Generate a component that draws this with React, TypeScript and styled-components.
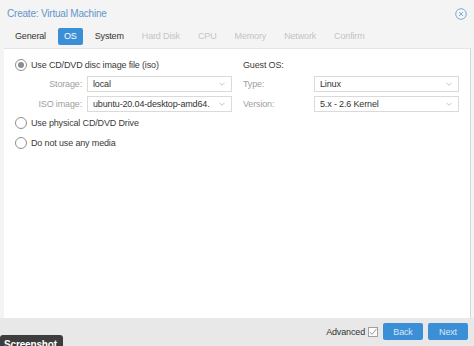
import styled, {createGlobalStyle} from "styled-components";

const GlobalStyle = createGlobalStyle`
    html, body {
        margin: 0;
        padding: 0;
        background: #f4f4f4;
        font-family: "Liberation Sans", Arial, sans-serif;
        font-size: 9px;
        letter-spacing: -0.15px;
        color: #3a3a3a;
    }
`;

const Styled = {
    Window: styled.div`
        position: relative;
        width: 474px;
        height: 346px;
        display: flex;
        flex-direction: column;
        background: #f4f4f4;
        overflow: hidden;
    `,
    Header: styled.div`
        height: 26px;
        flex: none;
        display: flex;
        align-items: center;
        justify-content: space-between;
        padding: 0 7px 0 7px;
    `,
    Title: styled.div`
        font-size: 10px;
        letter-spacing: -0.2px;
        color: #6296cc;
    `,
    Close: styled.svg`
        width: 12px;
        height: 12px;
        margin-top: 1px;
    `,
    Tabs: styled.div`
        display: flex;
        align-items: center;
        gap: 6px;
        height: 20px;
        flex: none;
        padding: 0 0 0 9px;
    `,
    Tab: styled.div<{ $active?: boolean; $disabled?: boolean }>`
        height: 17px;
        line-height: 17px;
        padding: 0 6px;
        border-radius: 2px;
        background: ${p => p.$active ? "#3b8fd7" : "transparent"};
        color: ${p => p.$active ? "#fff" : p.$disabled ? "#c4c4c4" : "#333"};
    `,
    Panel: styled.div`
        flex: 1;
        margin: 2px 3px 0 4px;
        background: #fff;
        border-top: 1px solid #e4e4e4;
        border-right: 1px solid #d6d6d6;
        display: grid;
        grid-template-columns: 229px 1fr;
        align-content: start;
        padding: 6px 0 0 10px;
    `,
    Column: styled.div`
        display: flex;
        flex-direction: column;
    `,
    RadioRow: styled.label`
        display: flex;
        align-items: center;
        height: 19.5px;
        gap: 4px;
    `,
    Radio: styled.span<{ $checked?: boolean }>`
        width: 10px;
        height: 10px;
        border-radius: 50%;
        border: 1px solid #8e8e8e;
        display: inline-flex;
        align-items: center;
        justify-content: center;
        box-sizing: content-box;
        margin-left: 1px;
        &::after {
            content: "";
            width: 6px;
            height: 6px;
            border-radius: 50%;
            background: ${p => p.$checked ? "#8c8c8c" : "transparent"};
        }
    `,
    FieldRow: styled.div<{ $labelWidth: number }>`
        display: grid;
        grid-template-columns: ${p => p.$labelWidth}px 1fr;
        align-items: center;
        height: 19.5px;
    `,
    Label: styled.div<{ $right?: boolean }>`
        color: #a0a0a0;
        text-align: ${p => p.$right ? "right" : "left"};
        padding-right: ${p => p.$right ? "5px" : "0"};
    `,
    Select: styled.div<{ $width: number }>`
        width: ${p => p.$width}px;
        height: 14px;
        border: 1px solid #dadada;
        display: flex;
        align-items: center;
        justify-content: space-between;
        padding: 0 6px 0 5px;
        box-sizing: content-box;
        color: #333;
        white-space: nowrap;
        overflow: hidden;
    `,
    Chevron: styled.svg`
        width: 6px;
        height: 4px;
        flex: none;
        margin-left: 4px;
    `,
    Heading: styled.div`
        height: 19.5px;
        display: flex;
        align-items: center;
    `,
    Footer: styled.div`
        height: 28px;
        flex: none;
        display: flex;
        align-items: center;
        justify-content: flex-end;
        gap: 5px;
        padding: 0 6px 1px 0;
        box-sizing: border-box;
        background: #e8e8e8;
    `,
    Advanced: styled.div`
        display: flex;
        align-items: center;
        gap: 3px;
        color: #333;
    `,
    Check: styled.svg`
        width: 10px;
        height: 10px;
    `,
    Button: styled.div`
        width: 40px;
        height: 17px;
        border-radius: 2px;
        background: #3b8fd7;
        color: #d9e8f6;
        display: flex;
        align-items: center;
        justify-content: center;
    `,
    ScreenshotTag: styled.div`
        position: absolute;
        left: 0;
        top: 335px;
        width: 63px;
        height: 17px;
        background: #3d3d3d;
        border-radius: 3px 3px 0 0;
        color: #fff;
        font-weight: bold;
        font-size: 10px;
        padding: 4px 0 0 4px;
        box-sizing: border-box;
    `,
};

const Chevron = () => (
    <Styled.Chevron viewBox="0 0 6 4">
        <path d="M0.5 0.8 L3 3.3 L5.5 0.8" fill="none" stroke="#b8b8b8" strokeWidth="0.8"/>
    </Styled.Chevron>
);

const Select = ({value, width}: { value: string; width: number }) => (
    <Styled.Select $width={width}>
        <span>{value}</span>
        <Chevron/>
    </Styled.Select>
);

const tabs = [
    {name: "General"},
    {name: "OS", active: true},
    {name: "System"},
    {name: "Hard Disk", disabled: true},
    {name: "CPU", disabled: true},
    {name: "Memory", disabled: true},
    {name: "Network", disabled: true},
    {name: "Confirm", disabled: true},
];

const App = () => {
    return (
        <Styled.Window>
            <GlobalStyle/>
            <Styled.Header>
                <Styled.Title>Create: Virtual Machine</Styled.Title>
                <Styled.Close viewBox="0 0 12 12">
                    <circle cx="6" cy="6" r="5.3" fill="none" stroke="#72a2d4" strokeWidth="0.9"/>
                    <path d="M4 4 L8 8 M8 4 L4 8" stroke="#72a2d4" strokeWidth="0.9"/>
                </Styled.Close>
            </Styled.Header>
            <Styled.Tabs>
                {tabs.map(tab => (
                    <Styled.Tab key={tab.name} $active={tab.active} $disabled={tab.disabled}>
                        {tab.name}
                    </Styled.Tab>
                ))}
            </Styled.Tabs>
            <Styled.Panel>
                <Styled.Column>
                    <Styled.RadioRow>
                        <Styled.Radio $checked/>
                        Use CD/DVD disc image file (iso)
                    </Styled.RadioRow>
                    <Styled.FieldRow $labelWidth={73}>
                        <Styled.Label $right>Storage:</Styled.Label>
                        <Select value="local" width={132}/>
                    </Styled.FieldRow>
                    <Styled.FieldRow $labelWidth={73}>
                        <Styled.Label $right>ISO image:</Styled.Label>
                        <Select value="ubuntu-20.04-desktop-amd64." width={132}/>
                    </Styled.FieldRow>
                    <Styled.RadioRow>
                        <Styled.Radio/>
                        Use physical CD/DVD Drive
                    </Styled.RadioRow>
                    <Styled.RadioRow>
                        <Styled.Radio/>
                        Do not use any media
                    </Styled.RadioRow>
                </Styled.Column>
                <Styled.Column>
                    <Styled.Heading>Guest OS:</Styled.Heading>
                    <Styled.FieldRow $labelWidth={71}>
                        <Styled.Label>Type:</Styled.Label>
                        <Select value="Linux" width={132}/>
                    </Styled.FieldRow>
                    <Styled.FieldRow $labelWidth={71}>
                        <Styled.Label>Version:</Styled.Label>
                        <Select value="5.x - 2.6 Kernel" width={132}/>
                    </Styled.FieldRow>
                </Styled.Column>
            </Styled.Panel>
            <Styled.Footer>
                <Styled.Advanced>
                    Advanced
                    <Styled.Check viewBox="0 0 10 10">
                        <rect x="0.5" y="0.5" width="9" height="9" fill="#fff" stroke="#a0a0a0"/>
                        <path d="M2 5.2 L4 7.3 L8.6 1.8" fill="none" stroke="#8a8a8a" strokeWidth="0.9"/>
                    </Styled.Check>
                </Styled.Advanced>
                <Styled.Button>Back</Styled.Button>
                <Styled.Button>Next</Styled.Button>
            </Styled.Footer>
            <Styled.ScreenshotTag>Screenshot</Styled.ScreenshotTag>
        </Styled.Window>
    );
};

export default App;
